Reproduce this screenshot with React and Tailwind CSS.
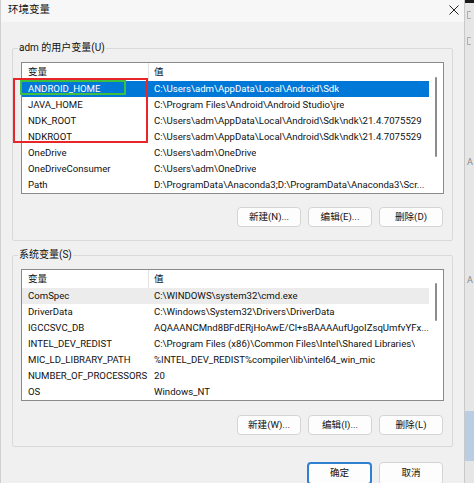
import React from 'react';

const userVars = [
  ['ANDROID_HOME', 'C:\\Users\\adm\\AppData\\Local\\Android\\Sdk'],
  ['JAVA_HOME', 'C:\\Program Files\\Android\\Android Studio\\jre'],
  ['NDK_ROOT', 'C:\\Users\\adm\\AppData\\Local\\Android\\Sdk\\ndk\\21.4.7075529'],
  ['NDKROOT', 'C:\\Users\\adm\\AppData\\Local\\Android\\Sdk\\ndk\\21.4.7075529'],
  ['OneDrive', 'C:\\Users\\adm\\OneDrive'],
  ['OneDriveConsumer', 'C:\\Users\\adm\\OneDrive'],
  ['Path', 'D:\\ProgramData\\Anaconda3;D:\\ProgramData\\Anaconda3\\Scr...']
];

const sysVars = [
  ['ComSpec', 'C:\\WINDOWS\\system32\\cmd.exe'],
  ['DriverData', 'C:\\Windows\\System32\\Drivers\\DriverData'],
  ['IGCCSVC_DB', 'AQAAANCMnd8BFdERjHoAwE/Cl+sBAAAAufUgoIZsqUmfvYFx...'],
  ['INTEL_DEV_REDIST', 'C:\\Program Files (x86)\\Common Files\\Intel\\Shared Libraries\\'],
  ['MIC_LD_LIBRARY_PATH', '%INTEL_DEV_REDIST%compiler\\lib\\intel64_win_mic'],
  ['NUMBER_OF_PROCESSORS', '20'],
  ['OS', 'Windows_NT']
];

function VarList({ rows, selected, hover, thumbTop, thumbHeight, marked }) {
  return (
    <div className="mx-[8px] h-[132px] border border-[#8a8a8a] bg-white flex">
      <div className="flex-1 min-w-0 flex flex-col">
        <div className="h-[18px] flex items-center shrink-0">
          <div className="w-[127px] h-full pl-[6px] border-r border-[#e3e3e3] flex items-center">变量</div>
          <div className="pl-[5px]">值</div>
        </div>
        <div className="relative flex flex-col">
          {rows.map(([name, value], i) => {
            let rowCls = 'text-[#111]';
            if (i === selected) rowCls = 'bg-[#0078d7] text-white';
            else if (i === hover) rowCls = 'bg-[#ececec] text-[#111]';
            return (
              <div key={name} className={`h-[16px] flex items-center whitespace-nowrap ${rowCls}`}>
                <div className="w-[127px] pl-[6px] shrink-0">{name}</div>
                <div className="pl-[5px] min-w-0 overflow-hidden">{value}</div>
              </div>
            );
          })}
          {marked && (
            <>
              <div className="absolute left-[-2px] top-[-1px] w-[106px] h-[15px] border-2 border-[#3fbf3f]" />
              <div className="absolute left-[-9px] top-[-3px] w-[135px] h-[65px] border-2 border-[#e8262a]" />
            </>
          )}
        </div>
      </div>
      <div className="w-[14px] shrink-0 flex justify-center">
        <div className="w-[2px] bg-[#8c8c8c] rounded-full" style={{ marginTop: thumbTop, height: thumbHeight }} />
      </div>
    </div>
  );
}

function Btn({ children }) {
  return (
    <button className="h-[20px] w-[64px] rounded-[4px] bg-[#fdfdfd] border border-[#d4d4d4] flex items-center justify-center">
      {children}
    </button>
  );
}

function Group({ title, children }) {
  return (
    <fieldset className="min-w-0 mx-[11px] border border-[#d9d9d9] rounded-[2px]">
      <legend className="ml-[5px] px-[1px] leading-[16px] text-[10px]">{title}</legend>
      {children}
    </fieldset>
  );
}

export default function App() {
  return (
    <div className="w-[474px] h-[483px] overflow-hidden flex bg-[#e6e6e6] text-[9.6px] text-[#111] font-['Roboto','Noto_Sans_CJK_SC',sans-serif]">
      <div className="w-[465px] h-full shrink-0 bg-[#f0f0f0] border-r border-[#c8c8c8] border-l border-l-[#cfcfcf] flex flex-col">
        <div className="h-[22px] bg-[#f7f7f7] flex items-center justify-between pl-[7px] pr-[4px] shrink-0">
          <span className="leading-[16px] mt-[-2px] text-[10.5px]">环境变量</span>
          <svg width="10" height="10" viewBox="0 0 10 10" className="mr-[1px] mt-[-2px]">
            <path d="M0.5 0.5 L9.5 9.5 M9.5 0.5 L0.5 9.5" stroke="#222" strokeWidth="1" />
          </svg>
        </div>

        <div className="mt-[18px]">
          <Group title="adm 的用户变量(U)">
            <div className="mt-[6px]">
              <VarList rows={userVars} selected={0} thumbTop={14} thumbHeight={80} marked />
            </div>
            <div className="mt-[13px] mb-[13px] pr-[9px] flex justify-end gap-[7px]">
              <Btn>新建(N)...</Btn>
              <Btn>编辑(E)...</Btn>
              <Btn>删除(D)</Btn>
            </div>
          </Group>
        </div>

        <div className="mt-[6px]">
          <Group title="系统变量(S)">
            <div className="mt-[6px]">
              <VarList rows={sysVars} hover={0} thumbTop={13} thumbHeight={38} />
            </div>
            <div className="mt-[14px] mb-[11px] pr-[9px] flex justify-end gap-[7px]">
              <Btn>新建(W)...</Btn>
              <Btn>编辑(I)...</Btn>
              <Btn>删除(L)</Btn>
            </div>
          </Group>
        </div>

        <div className="mt-[15px] pr-[21px] flex justify-end gap-[7px]">
          <button className="h-[23px] w-[65px] rounded-[4px] bg-[#fdfdfd] border-2 border-[#2f80d0] flex items-center justify-center">确定</button>
          <button className="h-[23px] w-[64px] rounded-[4px] bg-[#fdfdfd] border border-[#d4d4d4] flex items-center justify-center">取消</button>
        </div>
      </div>

      <div className="flex-1 flex flex-col">
        <div className="h-[3px] bg-[#1a1a1a]" />
        <div className="mt-[8px] ml-[2px] w-[4px] h-[8px] border border-r-0 border-[#b0b0b0]" />
        <div className="mt-[18px] ml-[2px] w-[4px] h-[8px] border border-r-0 border-[#b0b0b0]" />
        <div className="mt-[112px] ml-[2px] text-[9px] text-[#888] leading-[10px]">A</div>
        <div className="mt-[108px] ml-[2px] text-[9px] text-[#888] leading-[10px]">A</div>
        <div className="mt-[126px] h-[50px] bg-[#b9cde3]" />
      </div>
    </div>
  );
}
